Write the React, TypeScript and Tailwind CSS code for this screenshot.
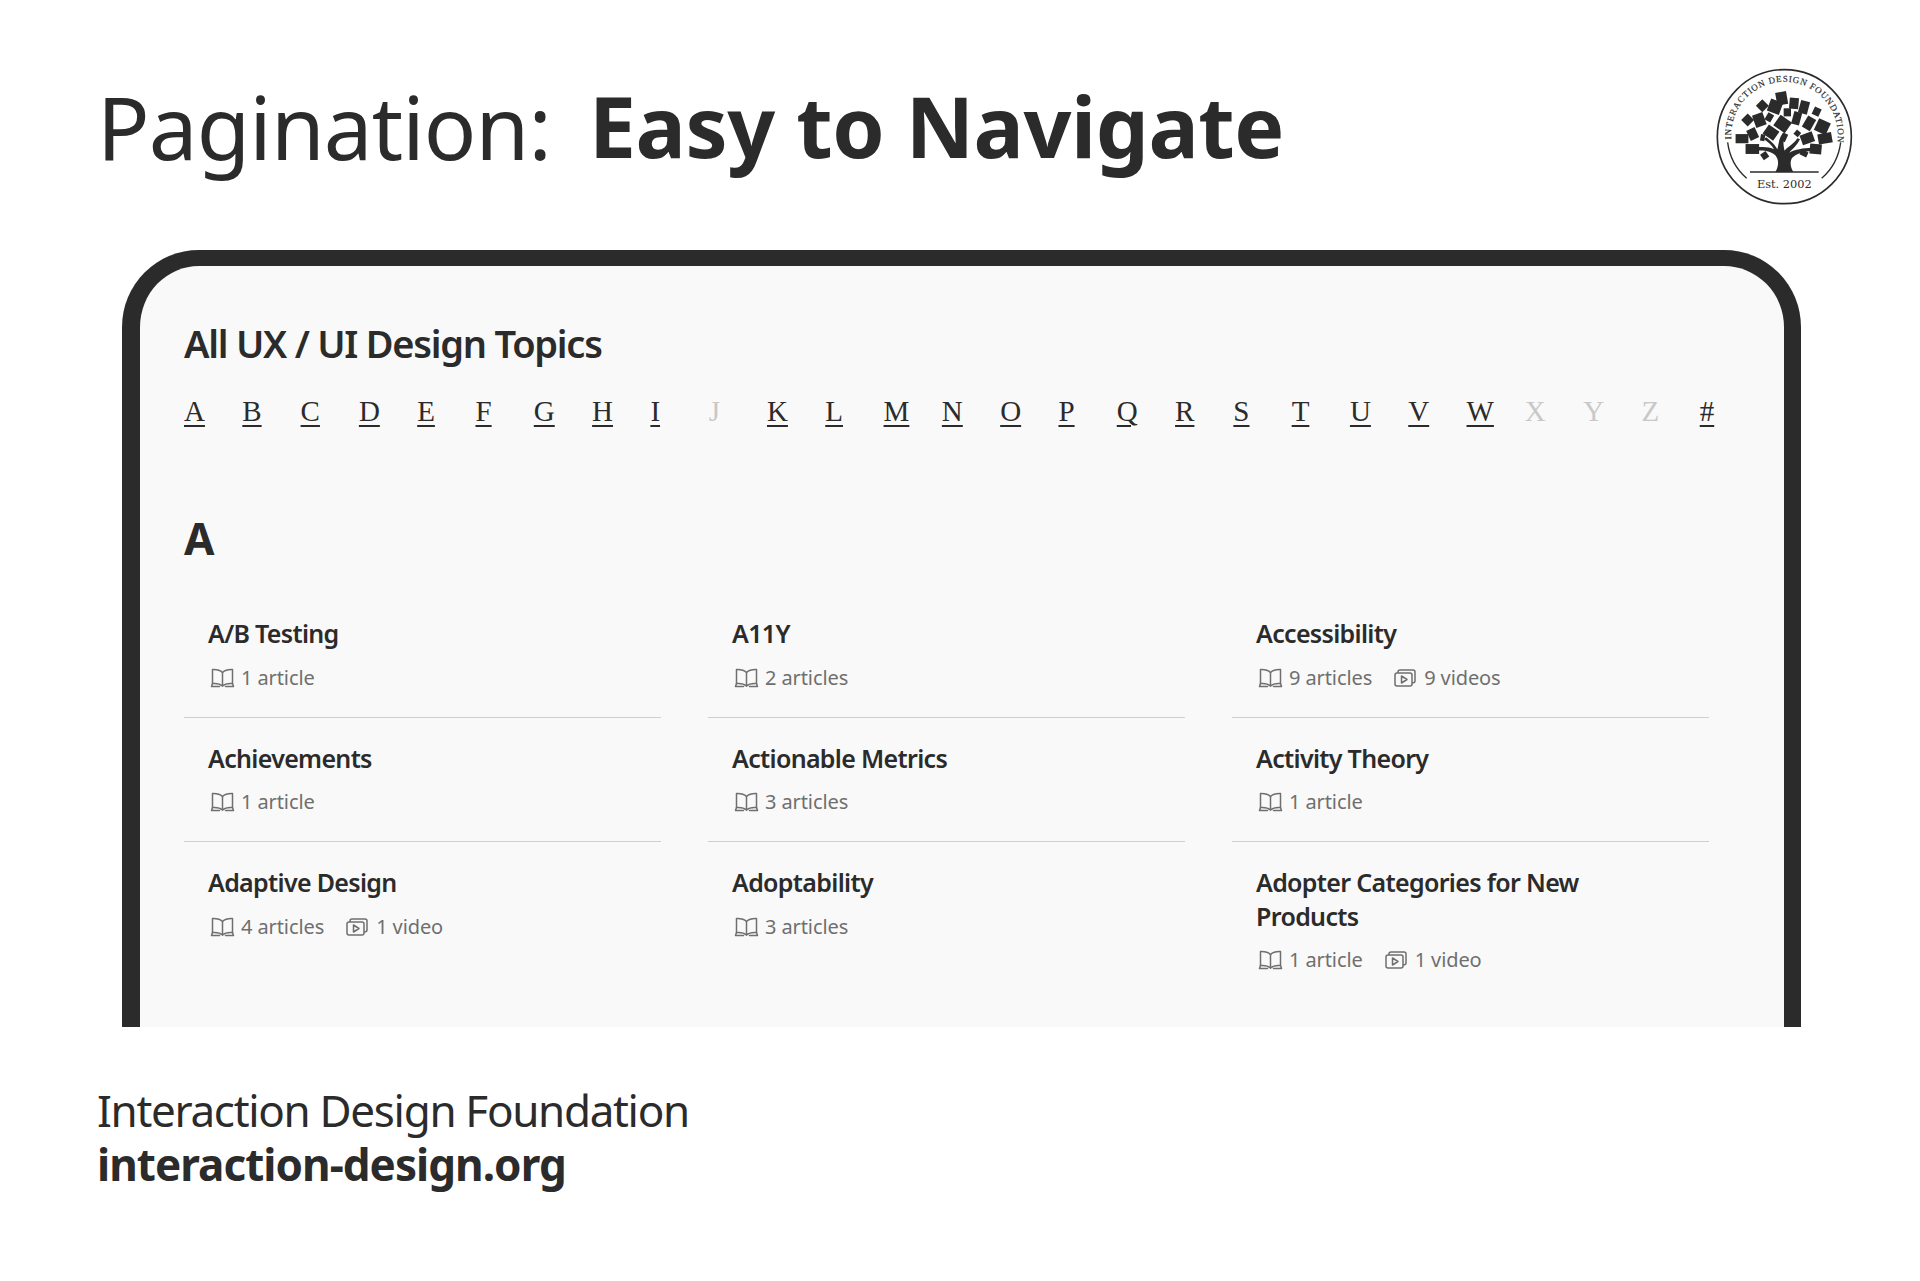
import React from "react";

const sans = "font-['Noto_Sans',sans-serif]";

const leaves: [number, number, number, number, number][] = [
  [275,145,30,35,-10],[217,167,25,25,45],[255,170,35,35,20],[312,160,25,30,5],[342,172,25,35,15],[380,185,20,22,25],[292,187,20,22,0],
  [173,210,25,25,45],[208,210,30,35,-20],[238,202,18,22,30],[320,205,22,35,15],[278,222,38,35,35],[357,220,25,35,30],[397,230,35,35,25],
  [188,252,25,30,-25],[243,248,35,30,35],[218,263,12,18,10],[282,262,15,22,25],[322,250,15,15,40],[352,265,35,28,-20],[405,265,38,28,-10],
  [156,266,35,25,0],[187,297,37,27,0],[377,297,32,27,5],[224,317,18,18,-35],[342,310,20,15,25],
];

function Logo() {
  return (
    <svg width="190" height="170" viewBox="0 0 570 510" className="shrink-0" fill="none">
      <circle cx="283" cy="260" r="201" stroke="#2b2b2b" strokeWidth="5" />
      <path id="logoArc" d="M124 268 A160 160 0 1 1 443 268" />
      <text fontFamily="'Liberation Serif',serif" fontSize="27" fontWeight="500" fill="#2b2b2b" letterSpacing="2.4" stroke="#2b2b2b" strokeWidth="0.5">
        <textPath href="#logoArc">INTERACTION DESIGN FOUNDATION</textPath>
      </text>
      <path d="M113 277 A172 172 0 0 0 170 385" stroke="#2b2b2b" strokeWidth="4" />
      <path d="M452 277 A172 172 0 0 1 395 385" stroke="#2b2b2b" strokeWidth="4" />
      {leaves.map(([x, y, w, h, r], i) => (
        <rect key={i} x={x - w * 0.55} y={y - h * 0.55} width={w * 1.1} height={h * 1.1} fill="#2b2b2b" transform={`rotate(${r} ${x} ${y})`} />
      ))}
      <path d="M180 366H386" stroke="#2b2b2b" strokeWidth="5" />
      <path d="M256 366C268 345 266 328 256 316C245 305 225 300 200 302L200 292C225 290 240 292 252 298C246 285 232 275 222 268L228 262C242 272 256 286 262 298C266 285 266 265 278 250L286 254C278 270 280 288 284 302C294 288 310 285 322 265L330 268C320 288 306 298 298 308C314 298 340 294 365 293L365 303C340 305 320 310 306 324C300 335 300 350 310 366Z" fill="#2b2b2b" />
      <text x="283" y="414" textAnchor="middle" fontFamily="'DejaVu Serif',serif" fontSize="34" fill="#2b2b2b">Est. 2002</text>
    </svg>
  );
}

function BookIcon() {
  return (
    <svg width="25" height="20" viewBox="0 0 25 20" fill="none" stroke="#6f6f6f" strokeWidth="1.5" strokeLinejoin="round" strokeLinecap="round" className="shrink-0">
      <path d="M12.500 4.500C10.500 2.500 7 1.500 3.500 1.500H2.500V15.500H4.500C7.500 15.500 10.500 16.200 12.500 18C14.500 16.200 17.500 15.500 20.500 15.500H22.500V1.500H21.500C18 1.500 14.500 2.500 12.500 4.500Z" />
      <path d="M12.500 4.500V18" />
      <path d="M2.500 15.500L1.500 18.500H9.500M22.500 15.500L23.500 18.500H15.500" />
    </svg>
  );
}

function VideoIcon() {
  return (
    <svg width="22" height="18" viewBox="0 0 22 18" fill="none" stroke="#6f6f6f" strokeWidth="1.5" strokeLinejoin="round" className="shrink-0">
      <rect x="1" y="4" width="17" height="13" rx="2" />
      <path d="M4 4V3C4 2 5 1 6 1H19C20 1 21 2 21 3V12C21 13 20 14 18 14" />
      <path d="M7.500 7V14L13 10.500Z" />
    </svg>
  );
}

type Topic = { t: string[]; a: string; v?: string };
const topics: Topic[] = [
  { t: ["A/B Testing"], a: "1 article" },
  { t: ["A11Y"], a: "2 articles" },
  { t: ["Accessibility"], a: "9 articles", v: "9 videos" },
  { t: ["Achievements"], a: "1 article" },
  { t: ["Actionable Metrics"], a: "3 articles" },
  { t: ["Activity Theory"], a: "1 article" },
  { t: ["Adaptive Design"], a: "4 articles", v: "1 video" },
  { t: ["Adoptability"], a: "3 articles" },
  { t: ["Adopter Categories for New", "Products"], a: "1 article", v: "1 video" },
];

const letters = "ABCDEFGHIJKLMNOPQRSTUVWXYZ#".split("");
const disabled = "JXYZ";

function Card({ topic, last }: { topic: Topic; last: boolean }) {
  return (
    <div className={`pl-[24px] pt-[24px] ${last ? "" : "h-[124.500px] border-b border-[#cfcfcf]"}`}>
      <div className="text-[25px] leading-[33.500px] font-semibold tracking-[-0.027em] text-[#2b2b2b]">
        {topic.t.map((l) => (
          <div key={l}>{l}</div>
        ))}
      </div>
      <div className="mt-[16px] flex h-[22px] items-center text-[20px] tracking-[-0.005em] text-[#6f6f6f]">
        <span className="ml-[2px]"><BookIcon /></span>
        <span className="ml-[6px]">{topic.a}</span>
        {topic.v && (
          <>
            <span className="ml-[22px]"><VideoIcon /></span>
            <span className="ml-[8px]">{topic.v}</span>
          </>
        )}
      </div>
    </div>
  );
}

export default function App() {
  return (
    <div className={`h-[1281px] w-[1920px] overflow-hidden bg-white ${sans} text-[#2b2b2b]`}>
      <header className="flex h-[250px] items-start justify-between pl-[97px] pr-[40px]">
        <h1 className="mt-[66px] flex text-[87px] leading-[120px] font-normal whitespace-nowrap">
          <span className="tracking-[-0.01em]">Pagination:</span>
          <span className="ml-[38px] text-[84px] font-bold tracking-[-0.005em]">Easy to Navigate</span>
        </h1>
        <div className="mt-[50px]"><Logo /></div>
      </header>

      <main className="ml-[122px] h-[777px] w-[1679px] rounded-t-[77px] border-[17px] border-l-[18px] border-t-[16px] border-b-0 border-[#2b2b2b] bg-[#f9f9f9] pl-[44px]">
        <h2 className="pt-[52px] text-[38px] leading-[50px] font-semibold tracking-[-0.033em]">All UX / UI Design Topics</h2>
        <nav className="mt-[25px] grid grid-cols-[repeat(27,58.300px)] font-['Liberation_Serif',serif] text-[29px] leading-[36px]">
          {letters.map((l) => (
            <a key={l} className={disabled.includes(l) ? "text-[#c8c8c8]" : "underline decoration-[1.500px] underline-offset-[4px]"}>
              {l}
            </a>
          ))}
        </nav>
        <h3 className="mt-[78px] text-[44px] leading-[62px] font-bold">A</h3>
        <div className="mt-[24px] grid w-[1525px] grid-cols-3 gap-x-[47px]">
          {topics.map((t, i) => (
            <Card key={t.t[0]} topic={t} last={i >= 6} />
          ))}
        </div>
      </main>

      <footer className="ml-[97px] mt-[56px] text-[44px] leading-[54px]">
        <div className="font-normal tracking-[-0.03em]">Interaction Design Foundation</div>
        <div className="font-bold tracking-[-0.022em]">interaction-design.org</div>
      </footer>
    </div>
  );
}
